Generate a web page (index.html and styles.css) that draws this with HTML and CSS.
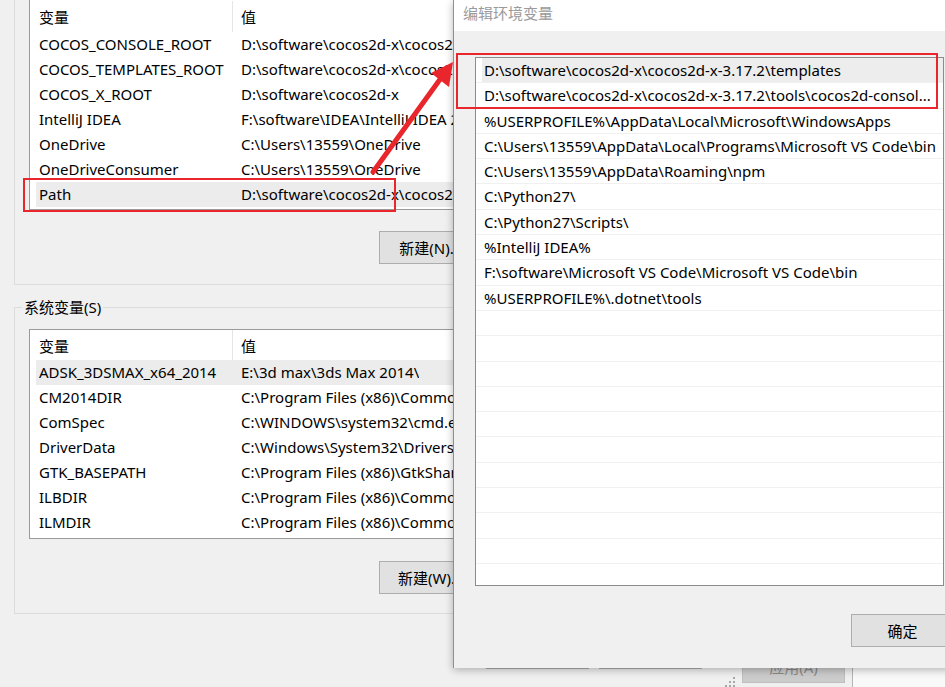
FILE: index.html
```html
<!DOCTYPE html>
<html lang="zh-CN">
<head>
<meta charset="utf-8">
<title>编辑环境变量</title>
<link rel="stylesheet" href="styles.css">
</head>
<body>
<div class="desktop">
  <div class="sysprops">
    <button class="btn btn-disabled">应用(A)</button>
  </div>

  <div class="envwin">
    <div class="group group-user">
      <div class="list list-clip">
        <div class="lhead"><span class="c1">变量</span><span class="c2">值</span></div>
        <div class="row"><span class="c1">COCOS_CONSOLE_ROOT</span><span class="c2">D:\software\cocos2d-x\cocos2d-x-3.17.2\tools\cocos2d-console\bin</span></div>
        <div class="row"><span class="c1">COCOS_TEMPLATES_ROOT</span><span class="c2">D:\software\cocos2d-x\cocos2d-x-3.17.2\templates</span></div>
        <div class="row"><span class="c1">COCOS_X_ROOT</span><span class="c2">D:\software\cocos2d-x</span></div>
        <div class="row"><span class="c1">IntelliJ IDEA</span><span class="c2">F:\software\IDEA\IntelliJ IDEA 2019.1\bin;</span></div>
        <div class="row"><span class="c1">OneDrive</span><span class="c2">C:\Users\13559\OneDrive</span></div>
        <div class="row"><span class="c1">OneDriveConsumer</span><span class="c2">C:\Users\13559\OneDrive</span></div>
        <div class="row sel"><span class="c1">Path</span><span class="c2">D:\software\cocos2d-x\cocos2d-x-3.17.2\templates;D:\software</span></div>
      </div>
      <div class="btnrow"><button class="btn">新建(N)...</button></div>
    </div>

    <fieldset class="group group-sys">
      <legend>系统变量(S)</legend>
      <div class="list">
        <div class="lhead"><span class="c1">变量</span><span class="c2">值</span></div>
        <div class="row sel"><span class="c1">ADSK_3DSMAX_x64_2014</span><span class="c2">E:\3d max\3ds Max 2014\</span></div>
        <div class="row"><span class="c1">CM2014DIR</span><span class="c2">C:\Program Files (x86)\Common Files\Autodesk Shared\Materials\</span></div>
        <div class="row"><span class="c1">ComSpec</span><span class="c2">C:\WINDOWS\system32\cmd.exe</span></div>
        <div class="row"><span class="c1">DriverData</span><span class="c2">C:\Windows\System32\Drivers\DriverData</span></div>
        <div class="row"><span class="c1">GTK_BASEPATH</span><span class="c2">C:\Program Files (x86)\GtkSharp\2.12\</span></div>
        <div class="row"><span class="c1">ILBDIR</span><span class="c2">C:\Program Files (x86)\Common Files\Autodesk Shared\Materials\</span></div>
        <div class="row"><span class="c1">ILMDIR</span><span class="c2">C:\Program Files (x86)\Common Files\Autodesk Shared\Materials\</span></div>
      </div>
      <div class="btnrow"><button class="btn">新建(W)...</button></div>
    </fieldset>

    <div class="winbtns">
      <button class="btn">确定</button>
      <button class="btn">取消</button>
    </div>
    <svg class="grip" width="10" height="10" viewBox="0 0 10 10">
      <g fill="#a8a8a8">
        <rect x="8" y="0" width="2" height="2"/>
        <rect x="4" y="4" width="2" height="2"/><rect x="8" y="4" width="2" height="2"/>
        <rect x="0" y="8" width="2" height="2"/><rect x="4" y="8" width="2" height="2"/><rect x="8" y="8" width="2" height="2"/>
      </g>
    </svg>
  </div>

  <div class="dialog">
    <div class="dtitle">编辑环境变量</div>
    <div class="dbody">
      <div class="plist">
        <div class="prow sel">D:\software\cocos2d-x\cocos2d-x-3.17.2\templates</div>
        <div class="prow">D:\software\cocos2d-x\cocos2d-x-3.17.2\tools\cocos2d-consol...</div>
        <div class="prow">%USERPROFILE%\AppData\Local\Microsoft\WindowsApps</div>
        <div class="prow">C:\Users\13559\AppData\Local\Programs\Microsoft VS Code\bin</div>
        <div class="prow">C:\Users\13559\AppData\Roaming\npm</div>
        <div class="prow">C:\Python27\</div>
        <div class="prow">C:\Python27\Scripts\</div>
        <div class="prow">%IntelliJ IDEA%</div>
        <div class="prow">F:\software\Microsoft VS Code\Microsoft VS Code\bin</div>
        <div class="prow">%USERPROFILE%\.dotnet\tools</div>
        <div class="prow"></div><div class="prow"></div><div class="prow"></div>
        <div class="prow"></div><div class="prow"></div><div class="prow"></div>
        <div class="prow"></div><div class="prow"></div><div class="prow"></div>
        <div class="prow"></div><div class="prow"></div>
      </div>
      <div class="dside">
        <button class="btn">新建(N)</button>
        <button class="btn">编辑(E)</button>
        <button class="btn">浏览(B)...</button>
        <button class="btn">删除(D)</button>
        <button class="btn">上移(U)</button>
        <button class="btn">下移(O)</button>
        <button class="btn">编辑文本(T)...</button>
      </div>
    </div>
    <div class="dfoot">
      <button class="btn">确定</button>
      <button class="btn">取消</button>
    </div>
  </div>

  <div class="redbox rb-path"></div>
  <div class="redbox rb-new"></div>
  <svg class="arrow" width="945" height="687" viewBox="0 0 945 687">
    <line x1="373" y1="172" x2="441" y2="78" stroke="#e8262b" stroke-width="5" stroke-linecap="round"/>
    <polygon points="453,62 431,73 449,87" fill="#e8262b"/>
  </svg>
</div>
</body>
</html>
```

FILE: styles.css
```css
html, body {
  margin: 0;
  padding: 0;
  overflow: hidden;
}

body {
  background: #f0f0f0;
  font-family: "Noto Sans", "Noto Sans CJK SC", sans-serif;
  font-size: 15px;
  color: #000;
}

.desktop {
  position: relative;
  width: 945px;
  height: 687px;
  overflow: hidden;
  background: #f9f9f9;
}

/* window behind (system properties) */
.sysprops {
  position: absolute;
  z-index: 1;
  left: 400px;
  top: 0;
  width: 453px;
  height: 687px;
  box-sizing: border-box;
  background: #f0f0f0;
  border-right: 1px solid #b4b4b4;
  display: flex;
  align-items: flex-end;
  justify-content: flex-end;
  padding: 0 7px 4px 0;
}

/* environment variables window */
.envwin {
  position: relative;
  z-index: 2;
  width: 738px;
  height: 689px;
  box-sizing: border-box;
  background: #f0f0f0;
  padding-left: 14px;
}

.group {
  width: 483px;
  box-sizing: border-box;
  border: 1px solid #dcdcdc;
  margin: 0;
  min-width: 0;
  padding: 0 14px;
}

.group-user {
  border-top: none;
  padding-bottom: 20px;
}

.group-sys {
  margin-top: 12px;
  padding-bottom: 19px;
}

.group-sys legend {
  margin-left: -7px;
  padding: 0 2px;
  line-height: 20px;
  height: 20px;
}

.group-sys .list {
  margin-top: 12px;
}

.list {
  background: #fff;
  border: 1px solid #9a9a9a;
  padding-bottom: 3px;
  overflow: hidden;
}

.list-clip {
  border-top: none;
  padding-bottom: 2px;
}

.lhead,
.row {
  display: flex;
  white-space: nowrap;
}

.lhead {
  height: 30px;
  align-items: center;
}

.list-clip .lhead {
  height: 32px;
  padding-top: 1px;
  box-sizing: border-box;
}

.row {
  height: 25px;
  line-height: 25px;
}

.row.sel {
  background: linear-gradient(to right, transparent 6px, #ececec 6px);
}

.c1 {
  flex: none;
  width: 203px;
  box-sizing: border-box;
  padding-left: 9px;
  overflow: hidden;
}

.lhead .c1 {
  height: 100%;
  display: flex;
  align-items: center;
  border-right: 1px solid #e5e5e5;
}

.c2 {
  padding-left: 8px;
  overflow: hidden;
}

.btnrow {
  display: flex;
  justify-content: flex-end;
  margin-top: 21px;
}

.group-sys .btnrow {
  margin-top: 22px;
}

.btn {
  flex: none;
  width: 103px;
  height: 33px;
  box-sizing: border-box;
  background: #e1e1e1;
  border: 1px solid #adadad;
  font-family: inherit;
  font-size: 15px;
  color: #000;
  padding: 0;
  white-space: nowrap;
}

.btn-disabled {
  background: #cccccc;
  border-color: #bfbfbf;
  color: #8a8a8a;
}

.winbtns {
  display: flex;
  justify-content: flex-end;
  gap: 10px;
  margin-top: 22px;
  padding-right: 36px;
}

.grip {
  position: absolute;
  right: 3px;
  bottom: 2px;
}

/* edit dialog */
.dialog {
  position: absolute;
  z-index: 3;
  left: 453px;
  top: 0;
  width: 636px;
  height: 668px;
  box-sizing: border-box;
  background: #f0f0f0;
  border-left: 1px solid #8f8f8f;
  box-shadow: 0 2px 8px rgba(0, 0, 0, 0.28);
  display: flex;
  flex-direction: column;
}

.dtitle {
  height: 31px;
  flex: none;
  background: #fff;
  color: #9a9a9a;
  line-height: 26px;
  padding-left: 9px;
}

.dbody {
  display: flex;
  gap: 20px;
  padding: 26px 22px 0 21px;
}

.plist {
  flex: none;
  width: 469px;
  height: 529px;
  box-sizing: border-box;
  background: #fff;
  border: 1px solid #8c8c8c;
  overflow: hidden;
}

.prow {
  height: 25.3px;
  line-height: 25px;
  box-sizing: border-box;
  border-bottom: 1px solid #f0f0f0;
  padding-left: 8px;
  white-space: nowrap;
  overflow: hidden;
}

.prow.sel {
  background: linear-gradient(to right, transparent 6px, #ededed 6px);
}

.dside {
  display: flex;
  flex-direction: column;
  gap: 10px;
}

.dfoot {
  display: flex;
  justify-content: flex-end;
  gap: 10px;
  padding: 28px 22px 0 0;
}

/* annotations */
.redbox {
  position: absolute;
  z-index: 5;
  box-sizing: border-box;
  border: 2px solid #e8262b;
}

.rb-path {
  left: 23px;
  top: 178px;
  width: 373px;
  height: 34px;
}

.rb-new {
  left: 456px;
  top: 53px;
  width: 482px;
  height: 56px;
}

.arrow {
  position: absolute;
  z-index: 6;
  left: 0;
  top: 0;
  pointer-events: none;
}
```
